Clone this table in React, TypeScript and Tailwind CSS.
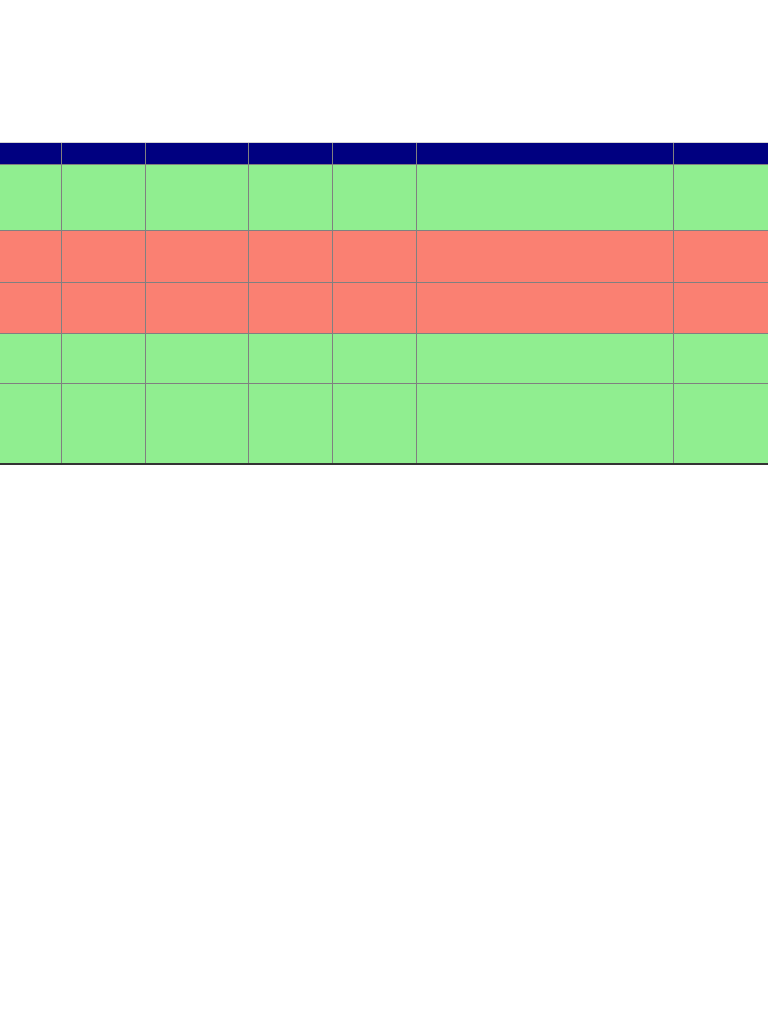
import React from "react";

const rows = [
  { h: "h-[66px]", bg: "bg-[#90ee90]", last: false },
  { h: "h-[52px]", bg: "bg-[#fa8072]", last: false },
  { h: "h-[51px]", bg: "bg-[#fa8072]", last: false },
  { h: "h-[50px]", bg: "bg-[#90ee90]", last: false },
  { h: "h-[81px]", bg: "bg-[#90ee90]", last: true },
];

const cols = 7;

export default function App() {
  return (
    <div className="min-h-[1024px] w-full bg-white pt-[142px] font-['Liberation_Sans',sans-serif] overflow-hidden">
      <div className="w-full">
        <div className="grid h-[23px] grid-cols-[62px_84px_103px_84px_84px_257px_1fr] border-y border-t-[#d4d4d4] border-b-[#808080] bg-[#000080]">
          {Array.from({ length: cols }).map((_, i) => (
            <div
              key={i}
              className={i < cols - 1 ? "border-r border-[#808080]" : ""}
            />
          ))}
        </div>
        {rows.map((r, ri) => (
          <div
            key={ri}
            className={`grid grid-cols-[62px_84px_103px_84px_84px_257px_1fr] ${r.h} ${r.bg} ${
              r.last ? "border-b-2 border-[#333333]" : "border-b border-[#808080]"
            }`}
          >
            {Array.from({ length: cols }).map((_, i) => (
              <div
                key={i}
                className={i < cols - 1 ? "border-r border-[#808080]" : ""}
              />
            ))}
          </div>
        ))}
      </div>
    </div>
  );
}
